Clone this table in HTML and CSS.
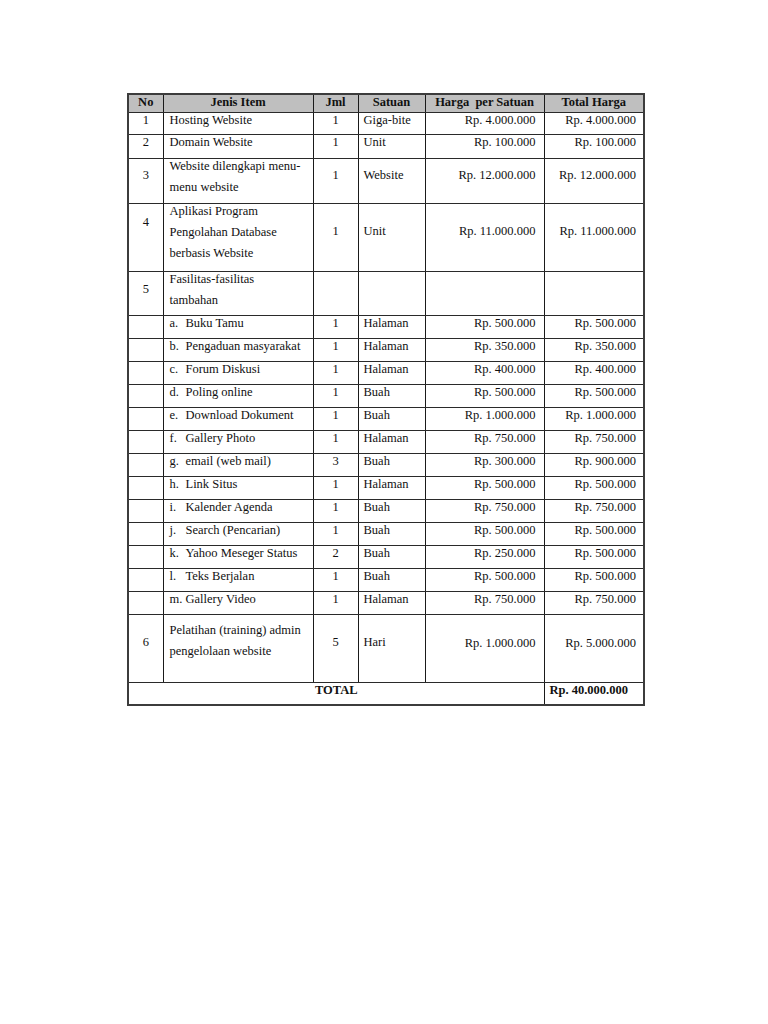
FILE: index.html
```html
<!DOCTYPE html>
<html lang="id">
<head>
<meta charset="utf-8">
<title>Rincian Biaya Website</title>
<link rel="stylesheet" href="styles.css">
</head>
<body>
<div class="page">
<table class="cost">
<colgroup>
<col class="c-no"><col class="c-item"><col class="c-jml"><col class="c-sat"><col class="c-harga"><col class="c-total">
</colgroup>
<thead>
<tr class="h-head">
<th>No</th><th>Jenis Item</th><th>Jml</th><th>Satuan</th><th>Harga&nbsp; per Satuan</th><th>Total Harga</th>
</tr>
</thead>
<tbody>
<tr class="h-r1">
<td class="no">1</td><td class="item">Hosting Website</td><td class="jml">1</td><td class="sat">Giga-bite</td><td class="num">Rp. 4.000.000</td><td class="num tot">Rp. 4.000.000</td>
</tr>
<tr class="h-r2">
<td class="no">2</td><td class="item">Domain Website</td><td class="jml">1</td><td class="sat">Unit</td><td class="num">Rp. 100.000</td><td class="num tot">Rp. 100.000</td>
</tr>
<tr class="h-r3">
<td class="no p9">3</td><td class="item"><div class="ml">Website dilengkapi menu-<br>menu website</div></td><td class="jml p9">1</td><td class="sat p9">Website</td><td class="num p9">Rp. 12.000.000</td><td class="num tot p9">Rp. 12.000.000</td>
</tr>
<tr class="h-r4">
<td class="no p11">4</td><td class="item"><div class="ml">Aplikasi Program<br>Pengolahan Database<br>berbasis Website</div></td><td class="jml p20">1</td><td class="sat p20">Unit</td><td class="num p20">Rp. 11.000.000</td><td class="num tot p20">Rp. 11.000.000</td>
</tr>
<tr class="h-r5">
<td class="no p10">5</td><td class="item"><div class="ml">Fasilitas-fasilitas<br>tambahan</div></td><td></td><td></td><td></td><td></td>
</tr>
<tr class="h-sub"><td></td><td class="item"><span class="lbl">a.</span>Buku Tamu</td><td class="jml">1</td><td class="sat">Halaman</td><td class="num">Rp. 500.000</td><td class="num tot">Rp. 500.000</td></tr>
<tr class="h-sub"><td></td><td class="item"><span class="lbl">b.</span>Pengaduan masyarakat</td><td class="jml">1</td><td class="sat">Halaman</td><td class="num">Rp. 350.000</td><td class="num tot">Rp. 350.000</td></tr>
<tr class="h-sub"><td></td><td class="item"><span class="lbl">c.</span>Forum Diskusi</td><td class="jml">1</td><td class="sat">Halaman</td><td class="num">Rp. 400.000</td><td class="num tot">Rp. 400.000</td></tr>
<tr class="h-sub"><td></td><td class="item"><span class="lbl">d.</span>Poling online</td><td class="jml">1</td><td class="sat">Buah</td><td class="num">Rp. 500.000</td><td class="num tot">Rp. 500.000</td></tr>
<tr class="h-sub"><td></td><td class="item"><span class="lbl">e.</span>Download Dokument</td><td class="jml">1</td><td class="sat">Buah</td><td class="num">Rp. 1.000.000</td><td class="num tot">Rp. 1.000.000</td></tr>
<tr class="h-sub"><td></td><td class="item"><span class="lbl">f.</span>Gallery Photo</td><td class="jml">1</td><td class="sat">Halaman</td><td class="num">Rp. 750.000</td><td class="num tot">Rp. 750.000</td></tr>
<tr class="h-sub"><td></td><td class="item"><span class="lbl">g.</span>email (web mail)</td><td class="jml">3</td><td class="sat">Buah</td><td class="num">Rp. 300.000</td><td class="num tot">Rp. 900.000</td></tr>
<tr class="h-sub"><td></td><td class="item"><span class="lbl">h.</span>Link Situs</td><td class="jml">1</td><td class="sat">Halaman</td><td class="num">Rp. 500.000</td><td class="num tot">Rp. 500.000</td></tr>
<tr class="h-sub"><td></td><td class="item"><span class="lbl">i.</span>Kalender Agenda</td><td class="jml">1</td><td class="sat">Buah</td><td class="num">Rp. 750.000</td><td class="num tot">Rp. 750.000</td></tr>
<tr class="h-sub"><td></td><td class="item"><span class="lbl">j.</span>Search (Pencarian)</td><td class="jml">1</td><td class="sat">Buah</td><td class="num">Rp. 500.000</td><td class="num tot">Rp. 500.000</td></tr>
<tr class="h-sub"><td></td><td class="item"><span class="lbl">k.</span>Yahoo Meseger Status</td><td class="jml">2</td><td class="sat">Buah</td><td class="num">Rp. 250.000</td><td class="num tot">Rp. 500.000</td></tr>
<tr class="h-sub"><td></td><td class="item"><span class="lbl">l.</span>Teks Berjalan</td><td class="jml">1</td><td class="sat">Buah</td><td class="num">Rp. 500.000</td><td class="num tot">Rp. 500.000</td></tr>
<tr class="h-sub"><td></td><td class="item"><span class="lbl">m.</span>Gallery Video</td><td class="jml">1</td><td class="sat">Halaman</td><td class="num">Rp. 750.000</td><td class="num tot">Rp. 750.000</td></tr>
<tr class="h-r6">
<td class="no p20">6</td><td class="item p8"><div class="ml">Pelatihan (training) admin<br>pengelolaan website</div></td><td class="jml p20">5</td><td class="sat p20">Hari</td><td class="num p21">Rp. 1.000.000</td><td class="num tot p21">Rp. 5.000.000</td>
</tr>
<tr class="h-total">
<td colspan="5" class="total-label">TOTAL</td><td class="grand">Rp. 40.000.000</td>
</tr>
</tbody>
</table>
</div>
</body>
</html>
```
FILE: styles.css
```css
html, body {
  margin: 0;
  padding: 0;
  background: #ffffff;
}
.page {
  padding: 93px 0 0 127px;
}
.cost {
  border-collapse: collapse;
  table-layout: fixed;
  width: 516px;
  font-family: "Liberation Serif", "Times New Roman", serif;
  font-size: 12.5px;
  line-height: 15px;
  color: #111111;
  border: 2px solid #3c3c3c;
}
.c-no { width: 35px; }
.c-item { width: 150px; }
.c-jml { width: 45px; }
.c-sat { width: 67px; }
.c-harga { width: 119px; }
.c-total { width: 100px; }
.cost th, .cost td {
  border-left: 1px solid #1a1a1a;
  border-right: 1px solid #1a1a1a;
  border-top: 1.5px solid #2a2a2a;
  border-bottom: 1.5px solid #2a2a2a;
  padding: 0;
  vertical-align: top;
  white-space: nowrap;
  overflow: hidden;
}
.cost th {
  background: #bfbfbf;
  font-weight: bold;
  text-align: center;
}
.h-head { height: 18px; }
.h-r1 { height: 22px; }
.h-r2 { height: 24px; }
.h-r3 { height: 45px; }
.h-r4 { height: 68px; }
.h-r5 { height: 44px; }
.h-sub { height: 23px; }
.h-r6 { height: 68px; }
.h-total { height: 23px; }
.cost td.no, .cost td.jml { text-align: center; }
.cost td.item { padding-left: 6px; }
.cost td.sat { padding-left: 5px; }
.cost td.num { text-align: right; padding-right: 8px; }
.cost td.num.tot { padding-right: 7px; }
.ml {
  line-height: 21px;
  margin-top: -3px;
}
.lbl {
  display: inline-block;
  width: 16px;
}
.cost td.p8 { padding-top: 8px; }
.cost td.p9 { padding-top: 9px; }
.cost td.p10 { padding-top: 10px; }
.cost td.p11 { padding-top: 11px; }
.cost td.p20 { padding-top: 20px; }
.cost td.p21 { padding-top: 21px; }
.cost td.total-label {
  text-align: center;
  font-weight: bold;
}
.cost td.grand {
  font-weight: bold;
  padding-left: 5px;
}
```
